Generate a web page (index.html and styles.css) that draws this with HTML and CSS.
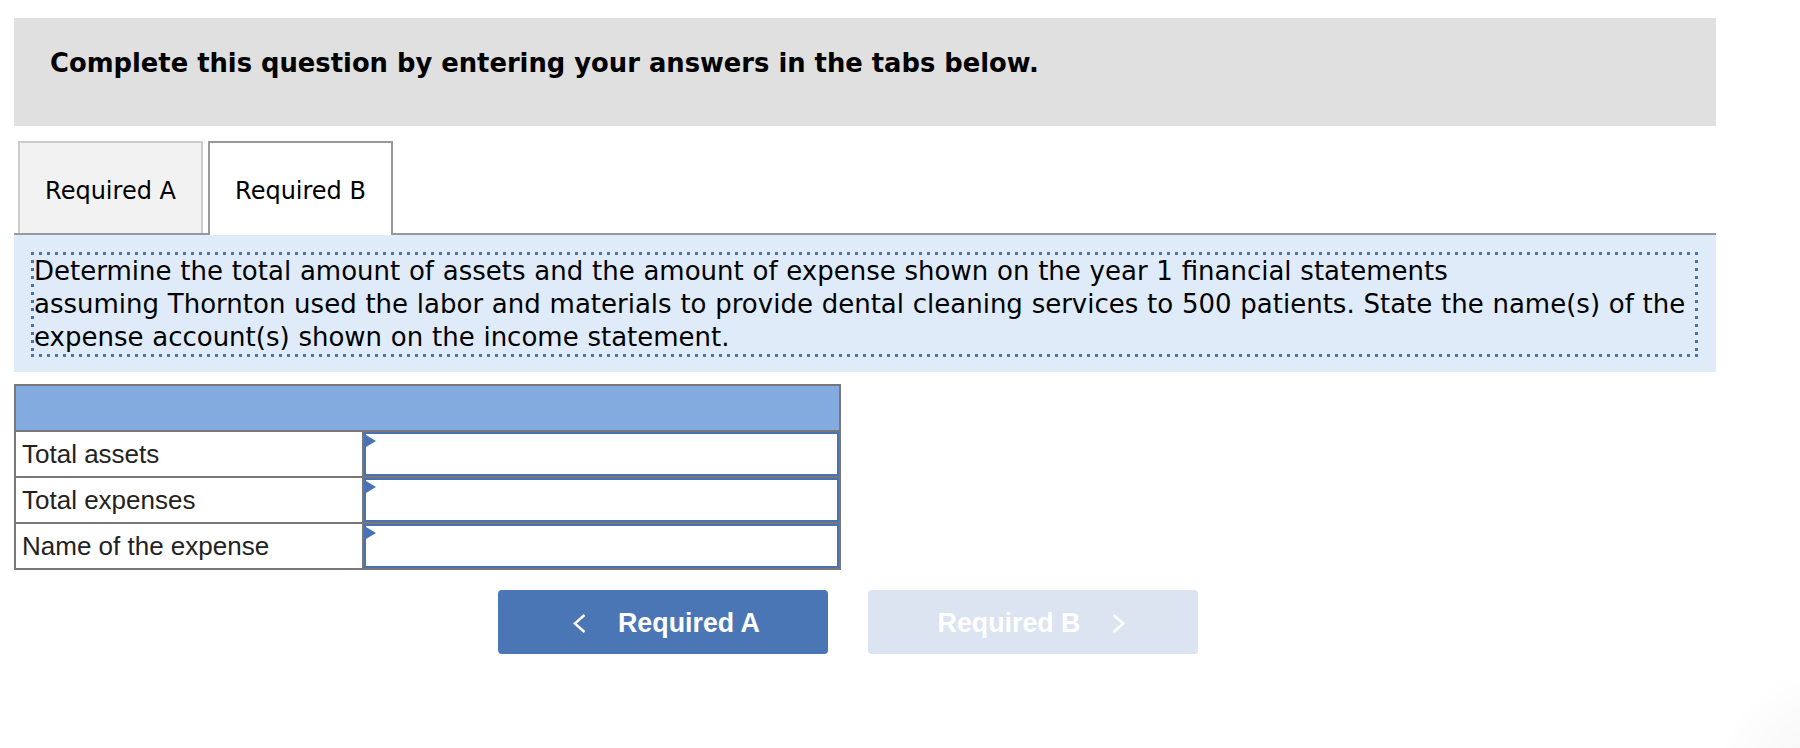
FILE: index.html
```html
<!DOCTYPE html>
<html>
<head>
  <meta charset="utf-8">
  <title>Required B</title>
  <link rel="stylesheet" href="styles.css">
</head>

<body>

<div class="page">

  <!-- instructions -->
  <div class="banner">
    <h2>Complete this question by entering your answers in the tabs below.</h2>
  </div>

  <!-- tabs -->
  <div class="tabs">
    <div class="tab">Required A</div>
    <div class="tab active">Required B</div>
  </div>

  <div class="prompt">
    <div class="prompt-text">Determine the total amount of assets and the amount of expense shown on the year 1 financial statements<br>assuming Thornton used the labor and materials to provide dental cleaning services to 500 patients. State the name(s) of the expense account(s) shown on the income statement.</div>
  </div>

  <!-- answer grid -->
  <div class="answers">
    <div class="answers-head"></div>

    <div class="label">Total assets</div>
    <div class="cell"><input type="text" class="answer"></div>

    <div class="label">Total expenses</div>
    <div class="cell"><input type="text" class="answer"></div>

    <div class="label">Name of the expense</div>
    <div class="cell"><input type="text" class="answer"></div>
  </div>

  <!-- prev / next -->
  <div class="nav">
    <button class="nav-btn prev">
      <svg width="13" height="19" viewBox="0 0 13 19"><polyline points="11.5,1 1.8,9.5 11.5,18" fill="none" stroke="#fff" stroke-width="2.4"/></svg>
      <span>Required A</span>
    </button>
    <button class="nav-btn next" disabled>
      <span>Required B</span>
      <svg width="13" height="19" viewBox="0 0 13 19"><polyline points="1.5,1 11.2,9.5 1.5,18" fill="none" stroke="#fff" stroke-width="2.4"/></svg>
    </button>
  </div>

</div>

</body>
</html>
```

FILE: styles.css
```css
body {
  margin: 0;
  min-height: 748px;
  font-family: "DejaVu Sans", Verdana, sans-serif;
  color: #000;
  background: #fff radial-gradient(circle at 1840px 790px, rgba(0,0,0,0.05), rgba(0,0,0,0) 130px) no-repeat;
}

.page {
  width: 1702px;
  margin: 18px 0 0 14px;
}

/* grey instructions bar */
.banner {
  background-color: #e0e0e0;
  padding: 30px 35px 48px 36px;
}
.banner h2 {
  margin: 0;
  font-size: 25.8px;
  line-height: 30px;
  font-weight: bold;
}

/* tabs */
.tabs {
  display: flex;
  gap: 5px;
  margin-top: 15px;
  padding-left: 4px;
  border-bottom: 2px solid #999;
}
.tab {
  box-sizing: border-box;
  width: 185px;
  height: 92px;
  display: flex;
  align-items: center;
  justify-content: center;
  padding-top: 5px;
  font-size: 24px;
  background-color: #f2f2f2;
  border: 2px solid #ccc;
  border-bottom: none;
}
.tab.active {
  height: 94px;
  margin-bottom: -2px;
  padding-top: 3px;
  background-color: #fff;
  border-color: #999;
}

/* question text */
.prompt {
  background-color: #dfebf8;
  padding: 17px 18px 15px 17px;
}
.prompt-text {
  padding: 3px;
  font-size: 26px;
  line-height: 33px;
  word-spacing: 0.5px;
  background-image:
    repeating-linear-gradient(to right, #4a74b8 0 3px, transparent 3px 8px),
    repeating-linear-gradient(to right, #4a74b8 0 3px, transparent 3px 8px),
    repeating-linear-gradient(to bottom, #4a74b8 0 3px, transparent 3px 8px),
    repeating-linear-gradient(to bottom, #4a74b8 0 3px, transparent 3px 8px);
  background-size: 100% 3px, 100% 3px, 3px 100%, 3px 100%;
  background-position: left top, left bottom, left top, right top;
  background-repeat: no-repeat;
}

/* answer table */
.answers {
  display: grid;
  grid-template-columns: 346px 475px;
  gap: 2px;
  width: max-content;
  margin-top: 12px;
  border: 2px solid #777;
  background-color: #777;
}
.answers-head {
  grid-column: 1 / 3;
  height: 44px;
  background-color: #84abdf;
}
.label {
  height: 44px;
  display: flex;
  align-items: center;
  padding-left: 6px;
  background-color: #fff;
  font-family: "Liberation Sans", Arial, sans-serif;
  font-size: 26px;
  color: #222;
}
.cell {
  position: relative;
  background-color: #fff;
}
.cell::before {
  content: "";
  position: absolute;
  left: 2px;
  top: 3px;
  border-left: 10px solid #4a72b8;
  border-top: 6px solid transparent;
  border-bottom: 6px solid transparent;
}
.answer {
  display: block;
  box-sizing: border-box;
  width: 100%;
  height: 44px;
  margin: 0;
  padding: 0 10px;
  border: 2px solid #4a72b0;
  background: #fff;
  font-family: "Liberation Sans", Arial, sans-serif;
  font-size: 25px;
  outline: none;
}

/* navigation buttons */
.nav {
  display: flex;
  gap: 40px;
  margin-top: 20px;
  padding-left: 484px;
}
.nav-btn {
  width: 330px;
  height: 64px;
  display: flex;
  align-items: center;
  justify-content: center;
  gap: 32px;
  padding: 3px 0 0;
  border: none;
  border-radius: 4px;
  font-family: "Liberation Sans", Arial, sans-serif;
  font-size: 26.8px;
  font-weight: bold;
  color: #fff;
}
.nav-btn.prev {
  padding-left: 7px;
  background-color: #4a76b5;
}
.nav-btn.next {
  padding-right: 3px;
  background-color: #dbe4f0;
}
```
